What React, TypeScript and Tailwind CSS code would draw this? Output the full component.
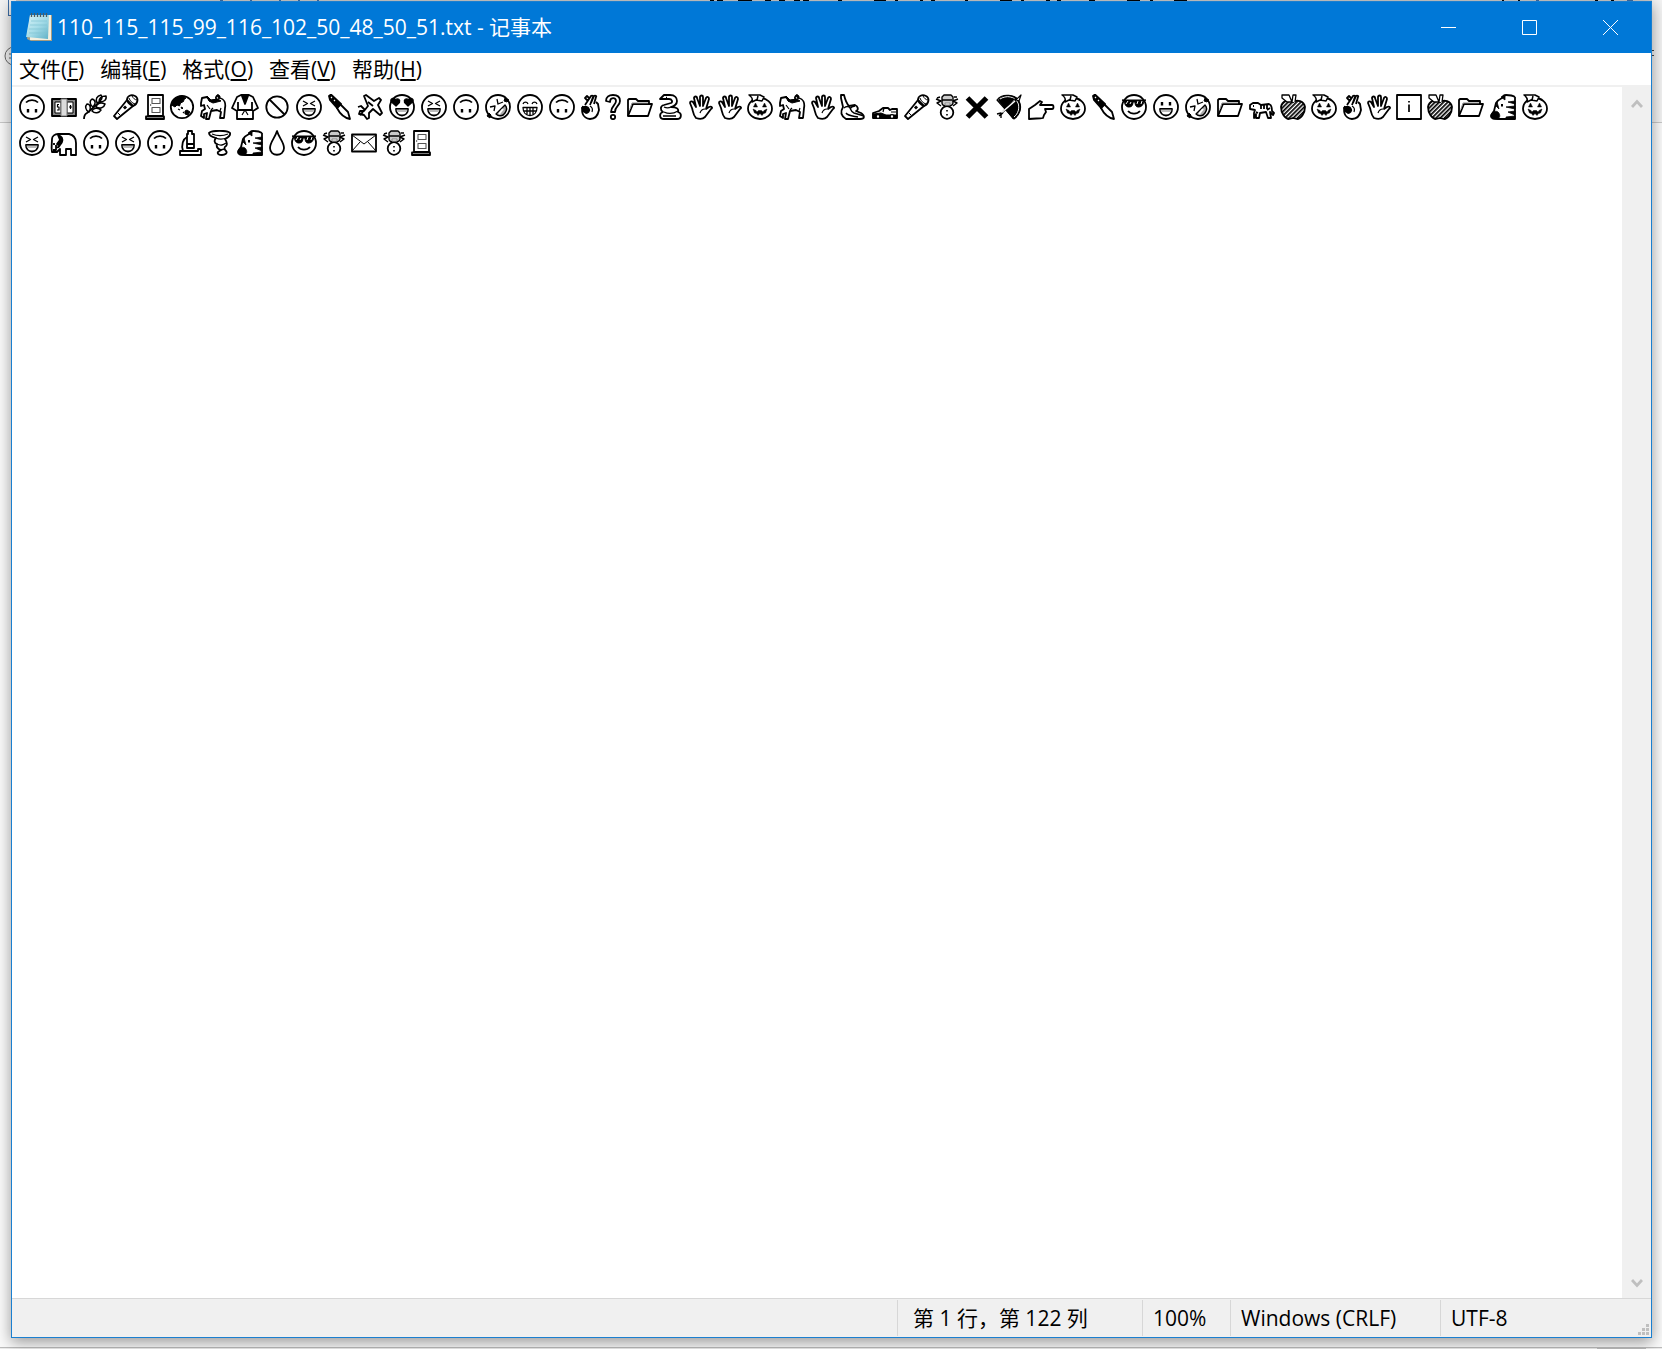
import type { ReactNode } from "react";

interface Glyph {
  width: number;
  art: ReactNode;
}

const Face = ({ children }: { children: ReactNode }) => (
  <>
    <circle cx="16" cy="13" r="12" />
    {children}
  </>
);

const openMouth = (
  <>
    <path d="M10 15h12c0 4-2.500 6.500-6 6.500S10 19 10 15z" fill="#fff" />
    <path d="M10.500 15.500h11l-.6 2.500h-9.800z" fill="#bbb" stroke="none" />
  </>
);

const GLYPHS: Record<string, Glyph> = {
  "🙃": {
    width: 32,
    art: (
      <Face>
        <path d="M10 8.500c3-3.300 9-3.300 12 0" />
        <path d="M12 15v3.500M20 15v3.500" strokeWidth="2.400" />
      </Face>
    ),
  },
  "💵": {
    width: 32,
    art: (
      <>
        <path d="M4 5h24v17H4z" fill="#888" />
        <path d="M7 8h6v11H7zM19 8h6v11h-6z" fill="#fff" strokeWidth="1" />
        <path d="M13 5h6v17h-6z" fill="#ddd" stroke="#777" strokeWidth="1" />
        <path
          d="M11 10.500H9.500v2.500H11v3H9M21 13h3m-1.500-2v4"
          strokeWidth="1.200"
        />
      </>
    ),
  },
  "🌿": {
    width: 30,
    art: (
      <>
        <path d="M4 25c0-3 1-5 3-6L22 6" />
        <path
          d="M17 9c-2-4 0-7 4-8 2 2 1 6-4 8zM19 8c0-4 3-6 7-6 1 4-2 6-7 6zM16 13c1-4 5-5 9-3-1 4-5 5-9 3zM12 17c1-3 6-4 9-1-2 3-6 4-9 1zM13 13c-3-2-4-6-1-8 4 1 4 5 1 8zM9 18c-4-2-4-6-2-8 4 0 4 5 2 8z"
          fill="#fff"
          strokeWidth="1.500"
        />
      </>
    ),
  },
  "🎤": {
    width: 32,
    art: (
      <>
        <path d="M17 6L4 22l3 3 16-13z" />
        <path d="M17 6c0-4 4-6 8-4s3 8-2 10c-3-1-5-3-6-6z" />
        <path d="M19 4c1 3 3 5 6 6M22 2c1 2 3 4 5 4M8 19l2 2" strokeWidth="1" />
        <path d="M14 12.500l2 2" strokeWidth="3" />
      </>
    ),
  },
  "🚪": {
    width: 25,
    art: (
      <>
        <path d="M6 1h15v21H6zM4 22.500h18V25H4z" />
        <path d="M10 4.500h8v5h-8zM10 13.500h8v5h-8z" stroke="#555" strokeWidth="1.100" />
        <path d="M8 11h1.200" strokeWidth="1.200" />
      </>
    ),
  },
  "🌏": {
    width: 30,
    art: (
      <>
        <circle cx="15" cy="13" r="11.200" />
        <path
          d="M4.500 11c1-5 5-9 10.500-9l4 2-2 1.500-.5 2-3 1.500-1 3-2.500-1-2 2zM18 17l2-1 3 2-2 3-3-1zM14 13l2 1-1 1z"
          fill="currentColor"
          strokeWidth="1"
        />
        <path d="M11 15l2 1M16 18l1 1" strokeWidth="1.200" />
      </>
    ),
  },
  "🐎": {
    width: 32,
    art: (
      <>
        <path d="M4 9l1-5 5-1 3 4 7-1c-2-2-1-4 1-5l2 3c4 1 6 5 5 10l-1 10h-4l1-6-4-2-6 1-2 8H9l1-6-3 1v4l-3-2 1-5 3-2-1-4-3 1z" />
        <path
          d="M10 2l4 4 7-1 3 2-8 2-4-2zM20 1l3 1-1 3z"
          fill="currentColor"
          strokeWidth="1"
        />
        <path d="M10 11l3 4M24 14l-1 3M16 14l-2 2" strokeWidth="1.200" />
      </>
    ),
  },
  "🥋": {
    width: 32,
    art: (
      <>
        <path d="M12 1h8l4 2 5 11-5 3v8H8v-8l-5-3L8 3zM9 8v9M23 8v9M9 16h14" />
        <path d="M13 2l3 8 3-8z" fill="currentColor" />
        <path d="M16 16l-3 5m3-5l3 5" strokeWidth="1.200" />
      </>
    ),
  },
  "🚫": {
    width: 32,
    art: (
      <>
        <circle cx="16" cy="13" r="10.700" />
        <path d="M8.500 5.500l15 15" />
      </>
    ),
  },
  "😆": {
    width: 32,
    art: (
      <Face>
        <path
          d="M10 7l4.500 2.500L10 12M22 7l-4.500 2.500L22 12"
          strokeWidth="1.300"
        />
        {openMouth}
      </Face>
    ),
  },
  "🔪": {
    width: 29,
    art: (
      <>
        <path d="M4 2l2-1.500L16 10l-4 4L5 6z" fill="currentColor" />
        <path d="M15 10l8 8 2 7c-5-1-10-5-13-11z" />
        <path d="M6 3l1 1M9 6l1 1" stroke="#fff" strokeWidth="1.200" />
      </>
    ),
  },
  "🛩": {
    width: 32,
    art: (
      <>
        <path d="M10 2l2-1 8 6 5-3 2 2-3 5 4 8-2 2-7-6-4 4v5l-2 1-3-4-5-1 1-3h4l4-5z" />
        <path d="M4 13l3-1 4 4M14 8l5 4M9 18l-3 3" />
      </>
    ),
  },
  "😍": {
    width: 32,
    art: (
      <Face>
        <path
          d="M10 12L5 7.500c-1-3 2.500-4.500 4.500-2 2.500-1.500 5 0 4 3zM22 12l5-4.500c1-3-2.500-4.500-4.500-2-2.500-1.500-5 0-4 3z"
          fill="currentColor"
          strokeWidth="1.200"
        />
        {openMouth}
      </Face>
    ),
  },
  "🤣": {
    width: 32,
    art: (
      <Face>
        <path d="M23 11l-9 9c3 3 7 2 9-1s2-6 0-8z" fill="#aaa" strokeWidth="1.400" />
        <path d="M21 15l-4 5" stroke="#fff" strokeWidth="2" />
        <path d="M15 5l1 5 5-2M8 13l5-1-1 5" strokeWidth="1.300" />
        <path
          d="M23 4l4 2-2 2-3-1zM7 19l2 2-1 3-3-2z"
          fill="currentColor"
          strokeWidth="1"
        />
      </Face>
    ),
  },
  "😁": {
    width: 32,
    art: (
      <Face>
        <path d="M9 10c1-2.500 4-2.500 5 0M18 10c1-2.500 4-2.500 5 0" strokeWidth="1.300" />
        <path
          d="M9 13.500h14c0 5-3 8-7 8s-7-3-7-8zM10 17h12M13 14v7M16 14v8M19 14v7"
          strokeWidth="1.300"
        />
      </Face>
    ),
  },
  "👌": {
    width: 24,
    art: (
      <>
        <path d="M5 12c-2 5-1 12 7 13 5 0 8-4 9-9l-1-6-2-2" />
        <path d="M7 11l6-9c1-1 3 0 2 1l-3 8M13 9l3-7c1-1 3 0 2 1l-2 7M11 4L9 2 7 4l3 3" />
        <path d="M4 14c2-2 6-2 7 1 1 2-1 4-3 4-2-1-3-2-4-5z" fill="currentColor" />
        <path d="M12 12c2 1 3 3 2 6" strokeWidth="1.200" />
      </>
    ),
  },
  "❓": {
    width: 22,
    art: (
      <>
        <path d="M4 7c0-4 3-6 7-6s7 2 7 6c0 5-5 5-5 11H9c0-6 5-7 5-11 0-4-6-4-6 1z" />
        <circle cx="11" cy="23" r="2.200" />
      </>
    ),
  },
  "📂": {
    width: 32,
    art: (
      <>
        <path d="M4 22V6l1-1h7l2 2h11v3" />
        <path d="M4 22L9 10h19l-4 12z" />
        <path d="M6 15l2-6h16" stroke="#888" strokeWidth="1" />
      </>
    ),
  },
  "🐍": {
    width: 30,
    art: (
      <>
        <path d="M4 5l4-4h6c5 0 7 3 7 6 0 4-3 5-6 6 6 0 8 2 7 5 4 1 4 7-1 7H8c-5 0-5-6-1-7-3-2-3-6 1-7l7-2c2-1 1-4-2-4H8z" />
        <path d="M8 18c4 2 9 2 14-1M7 22h13M8 13c2 1 5 1 7 0M10 3.500h1" strokeWidth="1.300" />
      </>
    ),
  },
  "🖐": {
    width: 29,
    art: (
      <>
        <path d="M10 24c-3-3-3-7-4-10L4 9c0-2 2-2 3-1l3 5L8 4c0-2 3-2 3 0l3 8V3c0-2 3-2 3 0v9l3-8c1-2 3-1 3 1l-3 10 3-2c3-1 4 1 2 2l-6 8c-2 2-6 2-9 1z" />
        <path d="M14 19c1-3 3-4 5-4" strokeWidth="1.200" />
      </>
    ),
  },
  "🎃": {
    width: 32,
    art: (
      <>
        <ellipse cx="16" cy="14.500" rx="12" ry="10.500" />
        <path d="M5 1h11l4 2-2 4-6-1-4 2c1-3 0-5-3-7zM14 2l-1 4" fill="#fff" strokeWidth="1.500" />
        <path
          d="M11.500 9l-2 4h4zM20.500 9l-2 4h4zM9 15l3 1.500 1 1.500 1.500-1.500h3L19 18l1-1.500 3-1.500-1.500 4-2 .5-1.500 2-2-2-2 2-1.500-2-2-.5z"
          fill="currentColor"
          strokeWidth=".500"
        />
      </>
    ),
  },
  "🍌": {
    width: 32,
    art: (
      <>
        <path d="M7 1H4v3l2 9c-3 5-2 9 3 12h14c5 0 5-3 1-6l-5-2c3-1 2-5-1-6l-6 1C9 9 8 5 7 1z" />
        <path d="M7 14c2-2 5-2 6 0s1 4 4 5l10 3M9 19c2 3 7 3 12 4M18 12c-2 0-4 1-5 3" strokeWidth="1.400" />
      </>
    ),
  },
  "🏎": {
    width: 32,
    art: (
      <>
        <path d="M4 19l6-2 4-3h5l2 2 2-1h5v9H4z" />
        <path d="M4 20l8-1 5 2h11v3H4z" fill="currentColor" strokeWidth="1" />
        <circle cx="9" cy="22.500" r="1.800" fill="#fff" strokeWidth="1.200" />
        <circle cx="23" cy="22.500" r="1.800" fill="#fff" strokeWidth="1.200" />
        <path d="M14 18l1-4M22 18h5" strokeWidth="1.200" />
      </>
    ),
  },
  "☃": {
    width: 28,
    art: (
      <>
        <circle cx="14" cy="18.500" r="6.300" />
        <path d="M9 3l2-2h7l2 2v6c0 2-3 3-6 3s-5-1-5-3z" fill="#ccc" strokeWidth="1.400" />
        <path d="M3 5l5 2-4 2 4 3M25 5l-5 2 4 2-4 3M7 3L4 4M21 3h3M9 6h10" strokeWidth="1.400" />
        <path d="M12 9h5v2h-5z" fill="#fff" stroke="#888" strokeWidth="1" />
        <path d="M14 16v1.600M14 20v1.600" strokeWidth="1.600" />
      </>
    ),
  },
  "✖": {
    width: 32,
    art: <path d="M6.500 4l19 19M25.500 4l-19 19" strokeWidth="5.200" />,
  },
  "🏹": {
    width: 32,
    art: (
      <>
        <path d="M6 6c5-6 17-5 20 2 3 6 0 14-6 16z" fill="currentColor" />
        <path d="M7 5c6-4 15-3 18 4 2 5 0 11-4 14" stroke="#fff" strokeWidth="1" />
        <path d="M4 6c5-7 19-6 22 2 3 6 0 14-5 17z" strokeWidth="1.200" />
        <path d="M7 21L28 1l-2 6-5-2z" fill="#fff" strokeWidth="1.200" />
        <path d="M7 20L22 7" stroke="#fff" strokeWidth="1.500" />
        <path d="M4 20l4-1v5M6 22l4-3" strokeWidth="1.400" />
      </>
    ),
  },
  "👉": {
    width: 32,
    art: (
      <path d="M4 15l6-4 5-4 2 1-2 3h12c2 0 2 4 0 4h-7l1 3-2 3-1 3c-4 1-9 0-14 1z" />
    ),
  },
  "😎": {
    width: 32,
    art: (
      <Face>
        <path
          d="M4 6h24l-2 1c-1 5-3 6-6 6-2 0-3-2-3-5h-2c0 3-1 5-4 5s-4-2-5-6z"
          fill="currentColor"
          strokeWidth="1"
        />
        <path
          d="M8 10l2-3M12 10l1-2M19 10l1-3M23 10l1-3"
          stroke="#fff"
          strokeWidth="1"
        />
        <path d="M10 17c3 3.500 9 3.500 12 0" />
      </Face>
    ),
  },
  "😀": {
    width: 32,
    art: (
      <Face>
        <path d="M12 8v3.500M20 8v3.500" strokeWidth="2.400" />
        {openMouth}
      </Face>
    ),
  },
  "🐅": {
    width: 32,
    art: (
      <>
        <path d="M4 11l3-2h5l3 2 8-1c3 1 3 4 3 7l2 2-1 2-3-3 1 6h-3l-2-6-6 1-1 5h-3v-4l-2 4H8v-5l1-3-5-1z" />
        <path d="M15 11v4M18 11v4M21 11v4M24 14l-3 2M12 19l-2-1M7 12h1" />
      </>
    ),
  },
  "🍎": {
    width: 30,
    art: (
      <>
        <path
          d="M15 8c4-3 11-1 12 5 0 6-4 12-8 12l-4-1-4 1C7 25 3 19 3 13c1-6 7-8 12-5z"
          fill="url(#hatch)"
        />
        <path
          d="M4 1h7l3 7H9L4 4zM14 8l1-7h3l-1 7"
          fill="#fff"
          strokeWidth="1.300"
        />
      </>
    ),
  },
  "ℹ": {
    width: 32,
    art: (
      <>
        <path d="M4 1h24v24H4z" />
        <path d="M16 10.500V18M16 7v1.600" strokeWidth="1.700" />
      </>
    ),
  },
  "🦓": {
    width: 32,
    art: (
      <>
        <path d="M28 3v22H11c-4 0-7 0-7-3 0-2 2-3 3-5l2-8c2-3 4-4 6-5 1-2 2-3 4-3 3 0 6 0 9 2" />
        <path
          d="M4 22c0-4 4-6 7-4 3 3 2 7-2 7-3 0-5-1-5-3zM28 7l-7 1 7 2zM28 12l-9 1 9 2zM28 17l-7 1 7 3zM28 22l-9 1v2h9zM14 3l4 3v-5zM12 15l-3-3 1-4z"
          fill="currentColor"
          strokeWidth=".800"
        />
        <path d="M15 10v2.500" strokeWidth="2" />
      </>
    ),
  },
  "🐘": {
    width: 32,
    art: (
      <>
        <path d="M10 4h11c5 1 7 5 7 9v12h-5v-6h-5v6h-6v-6l-3 3H4c-1-5 0-9 0-13 0-3 3-5 6-5z" />
        <path
          d="M10 5c4 1 5 4 4 7s-3 4-5 2l3-4z"
          fill="currentColor"
        />
        <path d="M6 13v2M8 17c2 1 3 0 4-2M5 20h3v-5" />
      </>
    ),
  },
  "🔬": {
    width: 29,
    art: (
      <>
        <path d="M12 1h4v3h2v14h-7V4h1zM4 25v-4h18v-2h3v6z" />
        <path d="M11 7c-4 2-6 8-4 14M11 14h7" />
      </>
    ),
  },
  "🌪": {
    width: 29,
    art: (
      <>
        <path d="M4 3c3-3 18-3 21 0 1 3-3 5-5 6 2 3 3 5 1 7-2 1-2 3 0 5s-1 4-4 4-5-1-4-3l3-2c-3-1-5-3-4-6-3-1-3-4-1-6-4-1-7-2-7-5z" />
        <path d="M7 4c5 2 11 2 16 0M11 8c4 2 8 1 11 0M12 14c4 2 6 1 9-1M15 20l5-1" strokeWidth="1.300" />
      </>
    ),
  },
  "💧": {
    width: 22,
    art: <path d="M11 1C9 8 4 12 4 18c0 9 14 9 14 0 0-6-5-10-7-17z" />,
  },
  "✉": {
    width: 32,
    art: (
      <>
        <path d="M4 4.500h24v17H4z" />
        <path d="M4 5l12 9 12-9M4 21l8-9M28 21l-8-9" strokeWidth="1" />
      </>
    ),
  },
};

const LINES = [
  "🙃💵🌿🎤🚪🌏🐎🥋🚫😆🔪🛩😍😆🙃🤣😁🙃👌❓📂🐍🖐🖐🎃🐎🖐🍌🏎🎤☃✖🏹👉🎃🔪😎😀🤣📂🐅🍎🎃👌🖐ℹ🍎📂🦓🎃",
  "😆🐘🙃😆🙃🔬🌪🦓💧😎☃✉☃🚪",
];

const MENUS = [
  { label: "文件", key: "F" },
  { label: "编辑", key: "E" },
  { label: "格式", key: "O" },
  { label: "查看", key: "V" },
  { label: "帮助", key: "H" },
];

const Emoji = ({ char }: { char: string }) => {
  const { width, art } = GLYPHS[char];
  return (
    <svg
      role="img"
      aria-label={char}
      width={width}
      height="26"
      viewBox={`0 0 ${width} 26`}
      fill="none"
      stroke="currentColor"
      strokeWidth="1.800"
      strokeLinejoin="round"
      className="shrink-0"
    >
      {art}
    </svg>
  );
};

const NotepadIcon = () => (
  <svg width="28" height="30" viewBox="0 0 28 30" aria-hidden="true">
    <defs>
      <linearGradient id="pad" x1="0" y1="0" x2="1" y2="1">
        <stop offset="0" stopColor="#d9f3f8" />
        <stop offset=".500" stopColor="#a5dce8" />
        <stop offset="1" stopColor="#5fb0c6" />
      </linearGradient>
    </defs>
    <path d="M5 3h22v26H6L2 27z" fill="#a79c80" />
    <path d="M5 3h21v25H5z" fill="#f3efe0" />
    <path d="M5 3h19l-1 24-22-2z" fill="url(#pad)" />
    <path
      d="M6 9h16M5 13h17M4 17h18M4 21h17"
      stroke="#7fc3d3"
      strokeWidth=".700"
    />
    <path
      d="M6.500 1v4M9.500 1v4M12.500 1v4M15.500 1v4M18.500 1v4M21.500 1v4"
      stroke="#4c5b60"
      strokeWidth="1.300"
    />
  </svg>
);

// the other window that peeks out around the edges
const Backdrop = () => (
  <div
    className="absolute inset-0 -z-10 overflow-hidden bg-[#fafafa]"
    aria-hidden="true"
  >
    <div className="h-[123px] border-b border-[#c8c8c8] bg-[#f3f3f3]" />
    <div className="absolute -top-1 left-2 h-5 w-10 border border-[#3f6fa8] bg-[#f3f3f3]" />
    <svg
      className="absolute left-1 top-[46px]"
      width="20"
      height="20"
      fill="none"
      stroke="#666"
    >
      <circle cx="10" cy="10" r="9" />
      <path d="M5 8h5M5 12h4" />
    </svg>
    <svg className="absolute left-0 top-0" width="1662" height="1">
      <path d="M16 .500h1636" stroke="#cdcdcd" />
      <path
        d="M710 .500h4M717 .500h6M738 .500h14M765 .500h6M779 .500h6M794 .500h6M803 .500h6M838 .500h4M874 .500h12M895 .500h3M920 .500h3M931 .500h4M965 .500h3M1000 .500h12M1021 .500h3M1046 .500h4M1057 .500h4M1089 .500h6M1127 .500h13M1150 .500h3M1174 .500h13M1502 .500h2M1518 .500h2M1595 .500h3M1611 .500h3"
        stroke="#000"
      />
      <path
        d="M220 .500h3M250 .500h2M279 .500h2M298 .500h2M317 .500h2M1536 .500h3M1627 .500h6"
        stroke="#3f6fa8"
      />
    </svg>
    <svg
      className="absolute right-2 top-[50px]"
      width="3"
      height="6"
      stroke="#444"
    >
      <path d="M0 .500h3M0 5.500h3" />
    </svg>
    <div className="absolute bottom-0 left-0 h-[2px] w-full border-t border-[#bcbcbc] bg-[#ededed]" />
    <div className="absolute bottom-0 right-4 h-px w-[49px] bg-[#bcbcbc]" />
  </div>
);

const TitleBar = () => (
  <header className="flex h-[51px] items-center bg-[#0078d7] text-white">
    <div className="flex flex-1 items-center gap-1 pb-px pl-[13px]">
      <NotepadIcon />
      <h1 className="whitespace-nowrap text-[21px] leading-7">
        110_115_115_99_116_102_50_48_50_51.txt - 记事本
      </h1>
    </div>
    <button
      type="button"
      aria-label="最小化"
      className="flex h-full w-[81px] items-center justify-center"
    >
      <svg width="15" height="15" stroke="currentColor" fill="none">
        <path d="M0 7.500h15" />
      </svg>
    </button>
    <button
      type="button"
      aria-label="最大化"
      className="flex h-full w-[81px] items-center justify-center"
    >
      <svg width="15" height="15" stroke="currentColor" fill="none">
        <path d="M.500.500h14v14H.500z" />
      </svg>
    </button>
    <button
      type="button"
      aria-label="关闭"
      className="flex h-full w-[81px] items-center justify-center"
    >
      <svg width="15" height="15" stroke="currentColor" fill="none">
        <path d="M0 0l15 15M15 0L0 15" />
      </svg>
    </button>
  </header>
);

const MenuBar = () => (
  <nav className="flex h-[34px] items-center gap-4 border-b-2 border-[#f0f0f0] bg-white pl-[7px]">
    {MENUS.map(({ label, key }) => (
      <button
        key={key}
        type="button"
        className="whitespace-nowrap text-[21px] leading-7"
      >
        {label}(<span className="underline underline-offset-2">{key}</span>)
      </button>
    ))}
  </nav>
);

const ScrollBar = () => (
  <div className="flex w-[29px] shrink-0 flex-col justify-between bg-[#f0f0f0] text-[#bfbfbf]">
    <button
      type="button"
      aria-label="向上滚动"
      className="flex h-[34px] items-center justify-center"
    >
      <svg width="12" height="10" fill="none" stroke="currentColor" strokeWidth="2.800">
        <path d="M1 8l5-5.500L11 8" />
      </svg>
    </button>
    <button
      type="button"
      aria-label="向下滚动"
      className="flex h-[30px] items-center justify-center"
    >
      <svg width="12" height="10" fill="none" stroke="currentColor" strokeWidth="2.800">
        <path d="M1 2l5 5.500L11 2" />
      </svg>
    </button>
  </div>
);

const StatusBar = () => (
  <footer className="relative flex h-[39px] items-stretch justify-end border-t border-[#d7d7d7] bg-[#f0f0f0] py-px text-[21px] leading-9">
    <p className="w-[245px] whitespace-nowrap border-l border-[#d7d7d7] pl-[15px]">
      第 1 行，第 122 列
    </p>
    <p className="w-[88px] whitespace-nowrap border-l border-[#d7d7d7] pl-[10px]">
      100%
    </p>
    <p className="w-[210px] whitespace-nowrap border-l border-[#d7d7d7] pl-[10px]">
      Windows (CRLF)
    </p>
    <p className="w-[211px] whitespace-nowrap border-l border-[#d7d7d7] pl-[10px]">
      UTF-8
    </p>
    <svg
      className="absolute bottom-[2px] right-[2px]"
      width="11"
      height="11"
      fill="#bfbfbf"
    >
      <path d="M8 0h3v3H8zM4 4h3v3H4zM8 4h3v3H8zM0 8h3v3H0zM4 8h3v3H4zM8 8h3v3H8z" />
    </svg>
  </footer>
);

export default function App() {
  return (
    <div className="relative isolate flex min-h-screen flex-col pb-[11px] pl-[11px] pr-[10px] pt-px font-['Open_Sans','Noto_Sans_CJK_SC',sans-serif] text-black">
      <Backdrop />
      <svg width="0" height="0" className="absolute" aria-hidden="true">
        <pattern
          id="hatch"
          width="3"
          height="3"
          patternUnits="userSpaceOnUse"
          patternTransform="rotate(45)"
        >
          <path d="M0 0h1.700v3H0z" fill="#000" />
        </pattern>
      </svg>
      <main className="flex flex-1 flex-col border border-[#1a7fd0] bg-white shadow-[0_4px_14px_rgba(0,0,0,0.4)]">
        <TitleBar />
        <MenuBar />
        <div className="flex flex-1">
          <div
            role="textbox"
            aria-label="文本编辑器"
            aria-multiline="true"
            tabIndex={0}
            className="min-w-0 flex-1 overflow-hidden pl-1 pt-[7px] outline-none"
          >
            {LINES.map((line) => (
              <div key={line} className="flex h-9 items-start">
                {Array.from(line).map((char, i) => (
                  <Emoji key={i} char={char} />
                ))}
              </div>
            ))}
          </div>
          <ScrollBar />
        </div>
        <StatusBar />
      </main>
    </div>
  );
}
